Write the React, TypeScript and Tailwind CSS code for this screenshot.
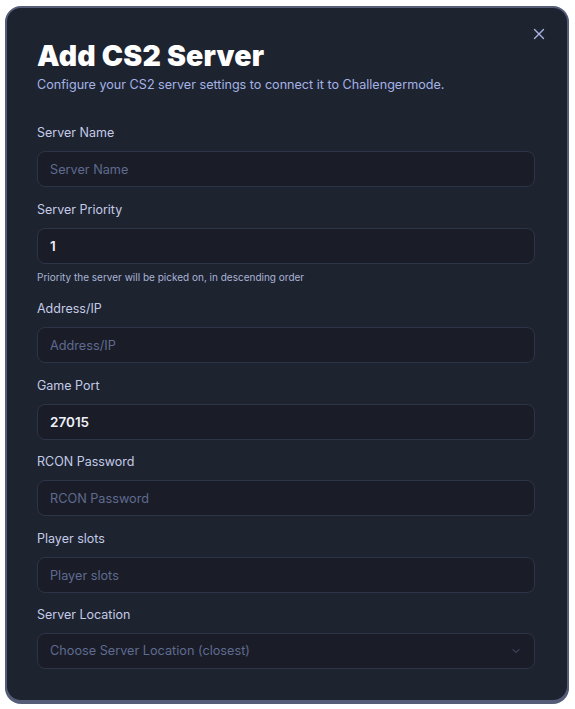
import React from "react";
import { X, ChevronDown } from "lucide-react";

interface FieldProps {
  label: string;
  placeholder: string;
  value?: string;
  hint?: string;
}

function Field({ label, placeholder, value, hint }: FieldProps) {
  return (
    <div className="flex flex-col">
      <label className="text-[12.5px] leading-[18px] text-[#c3cbe6] mb-[9px]">{label}</label>
      <input
        type="text"
        placeholder={placeholder}
        defaultValue={value}
        className="h-[36px] w-full rounded-[8px] border border-[#2d3447] bg-[#1a1d28] px-[12px] text-[13.5px] font-semibold text-[#eef0f7] placeholder:text-[12.7px] placeholder:font-normal placeholder:text-[#5f6b8f] outline-none"
      />
      {hint && <p className="mt-[6px] mb-[2px] text-[10px] leading-[15px] text-[#a9b4d6]">{hint}</p>}
    </div>
  );
}

export default function App() {
  return (
    <div className="min-h-[709px] bg-white pt-[6px] pl-[5px] font-['Inter','Liberation_Sans',sans-serif]">
      <div className="relative w-[564px] h-[696px] rounded-[16px] border-2 border-[#555d77] bg-[#1e2330] pl-[30px] pr-[32px] pt-[30px] shadow-[0_2px_0_#555d77]">
        <button
          type="button"
          className="absolute right-[19px] top-[17px] text-[#a7b5e4]"
          aria-label="Close"
        >
          <X size={18} strokeWidth={1.8} />
        </button>
        <h2 className="text-[28.5px] leading-[36px] font-black tracking-[0.2px] text-white">Add CS2 Server</h2>
        <p className="mt-[2px] text-[12.6px] leading-[18px] text-[#a3b3e6]">
          Configure your CS2 server settings to connect it to Challengermode.
        </p>

        <div className="mt-[30px] flex flex-col gap-[13.5px]">
          <Field label="Server Name" placeholder="Server Name" />
          <Field
            label="Server Priority"
            placeholder="Server Priority"
            value="1"
            hint="Priority the server will be picked on, in descending order"
          />
          <Field label="Address/IP" placeholder="Address/IP" />
          <Field label="Game Port" placeholder="Game Port" value="27015" />
          <Field label="RCON Password" placeholder="RCON Password" />
          <Field label="Player slots" placeholder="Player slots" />
          <div className="flex flex-col">
            <label className="text-[12.5px] leading-[18px] text-[#c3cbe6] mb-[9px]">Server Location</label>
            <div className="flex h-[36px] w-full items-center justify-between rounded-[8px] border border-[#2d3447] bg-[#1a1d28] pl-[12px] pr-[12px]">
              <span className="text-[12.7px] text-[#5f6b8f]">Choose Server Location (closest)</span>
              <ChevronDown size={12} className="text-[#4f5a7a]" />
            </div>
          </div>
        </div>
      </div>
    </div>
  );
}
